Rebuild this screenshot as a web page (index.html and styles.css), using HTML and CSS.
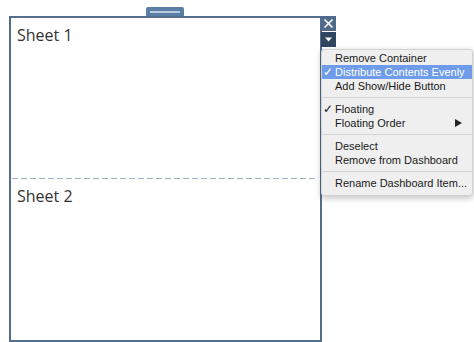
FILE: index.html
```html
<!DOCTYPE html>
<html>
  <head>
    <title>Dashboard container</title>
    <meta charset="UTF-8" />
    <link rel="stylesheet" href="styles.css">
  </head>
  <body>
    <div class="stage">
      <div class="handle"><span class="handle_line"></span></div>
      <div class="zone">
        <div class="sheet sheet_top">Sheet 1</div>
        <div class="divider"></div>
        <div class="sheet">Sheet 2</div>
      </div>

      <div class="zone_controls">
        <button class="ctrl ctrl_close">
          <svg width="11" height="11" viewBox="0 0 11 11">
            <path d="M1.5 1.5 L9.5 9.5 M9.5 1.5 L1.5 9.5" stroke="#fff" stroke-width="1.6" />
          </svg>
        </button>
        <button class="ctrl ctrl_menu">
          <svg width="7" height="5" viewBox="0 0 7 5">
            <path d="M0 0.5 H7 L3.5 4.5 Z" fill="#fff" />
          </svg>
        </button>
      </div>

      <div class="menu">
        <div class="menu_item">Remove Container</div>
        <div class="menu_item checked selected">Distribute Contents Evenly</div>
        <div class="menu_item">Add Show/Hide Button</div>
        <div class="menu_sep"></div>
        <div class="menu_item checked">Floating</div>
        <div class="menu_item has_sub">Floating Order <span class="arrow"></span></div>
        <div class="menu_sep"></div>
        <div class="menu_item">Deselect</div>
        <div class="menu_item">Remove from Dashboard</div>
        <div class="menu_sep"></div>
        <div class="menu_item">Rename Dashboard Item...</div>
      </div>
    </div>
  </body>
</html>
```

FILE: styles.css
```css
body {
  margin: 0;
  background: #fff;
  overflow: hidden;
  font-family: "Liberation Sans", Arial, sans-serif;
}

.stage {
  position: relative;
  width: 474px;
  height: 342px;
  padding: 7px 0 0 9px;
  box-sizing: border-box;
}

.handle {
  width: 38px;
  height: 9px;
  margin-left: 137px;
  background: #5b7ea6;
  border-radius: 2px 2px 0 0;
  display: flex;
  align-items: center;
  justify-content: center;
}

.handle_line {
  width: 30px;
  height: 2px;
  background: #b9cce0;
}

.zone {
  width: 313px;
  height: 326px;
  box-sizing: border-box;
  border: 2px solid #556d8e;
  display: flex;
  flex-direction: column;
}

.sheet {
  flex: 1;
  padding: 6px 0 0 6px;
  font-family: "Open Sans", "Noto Sans", sans-serif;
  font-size: 16px;
  color: #333;
}

.sheet_top {
  flex: 0 0 160px;
  box-sizing: border-box;
}

.divider {
  height: 1px;
  margin: 0 3px 0 1px;
  background: repeating-linear-gradient(90deg, #9eafc2 0 6px, transparent 6px 9px);
}

.zone_controls {
  position: absolute;
  left: 321px;
  top: 16px;
  display: flex;
  flex-direction: column;
  gap: 1px;
}

.ctrl {
  width: 15px;
  height: 15px;
  padding: 0;
  border: none;
  display: flex;
  align-items: center;
  justify-content: center;
}

.ctrl_close {
  background: #51698a;
}

.ctrl_menu {
  background: #2f4560;
}

.menu {
  position: absolute;
  left: 321px;
  top: 49px;
  width: 150px;
  padding: 1px 0 5px;
  background: #efefef;
  border: 1px solid #d2d2d2;
  border-radius: 3px;
  box-shadow: 0 2px 6px rgba(0, 0, 0, 0.25);
  font-size: 11px;
  color: #1a1a1a;
}

.menu_item {
  position: relative;
  height: 14px;
  line-height: 14px;
  padding-left: 13px;
  white-space: nowrap;
}

.menu_item.checked::before {
  content: "\2713";
  position: absolute;
  left: 1px;
  font-size: 12px;
}

.selected {
  background: #6e9bea;
  color: #fff;
}

.has_sub {
  display: flex;
  justify-content: space-between;
  padding-right: 10px;
}

.arrow {
  align-self: center;
  width: 0;
  height: 0;
  border-left: 7px solid #222;
  border-top: 4px solid transparent;
  border-bottom: 4px solid transparent;
}

.menu_sep {
  height: 1px;
  margin: 4px 0;
  background: #d4d4d4;
}
```
